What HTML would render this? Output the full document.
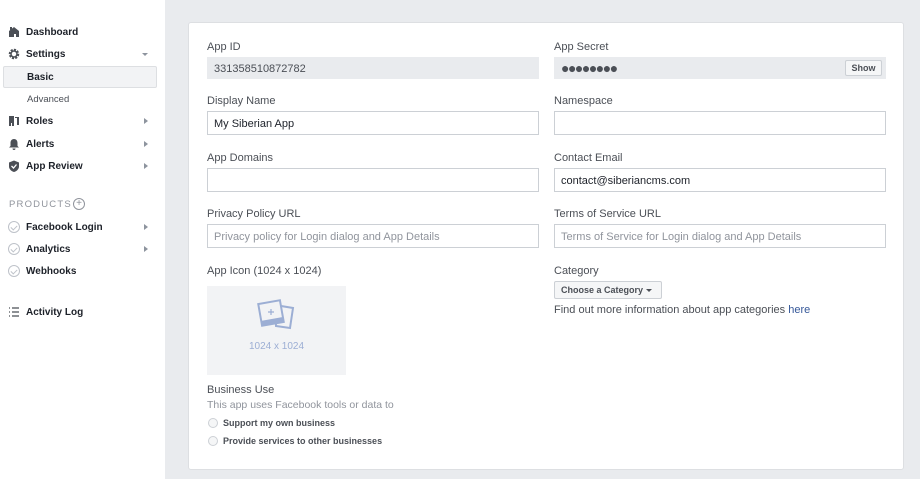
<!DOCTYPE html>
<html><head><style>
*{box-sizing:border-box;margin:0;padding:0}
body{width:920px;height:479px;overflow:hidden;background:#e9ebee;font-family:"Liberation Sans",Helvetica,sans-serif;position:relative;color:#1d2129}
.sb{position:absolute;left:0;top:0;width:165px;height:479px;background:#fff}
.a{position:absolute}
.nav{position:absolute;left:26px;font-size:10px;font-weight:bold;color:#1d2129}
.ic{position:absolute;left:8px;width:12px;height:12px}
.arr{position:absolute;left:144px;width:0;height:0;border-top:3px solid transparent;border-bottom:3px solid transparent;border-left:4px solid #8d949e}
.card{position:absolute;left:188px;top:22px;width:716px;height:448px;background:#fff;border:1px solid #dddfe2;border-radius:3px}
.lb{position:absolute;font-size:11px;color:#4b4f56}
.in{position:absolute;width:332px;height:24px;border:1px solid #ccd0d5;background:#fff;font-size:11px;padding:6px 6px 0;color:#1d2129}
.ph{color:#90949c}
.chk{position:absolute;left:8px;width:12px;height:12px;border:1px solid #bec2c9;border-radius:50%}
.chk:after{content:"";position:absolute;left:3px;top:2px;width:3px;height:5px;border-right:1px solid #bec2c9;border-bottom:1px solid #bec2c9;transform:rotate(45deg)}
.radio{position:absolute;left:208px;width:10px;height:10px;border:1px solid #ccd0d5;border-radius:50%;background:#f5f6f7}
</style></head><body>
<div class="sb">
 <svg class="ic" style="top:26px" viewBox="0 0 12 12"><path d="M1 5L6 1l5 4v6H8V8H6v3H1z" fill="#4b4f56"/><rect x="2" y="1" width="2" height="3" fill="#4b4f56"/></svg>
 <div class="nav" style="top:27px">Dashboard</div>
 <svg class="ic" style="top:48px" viewBox="0 0 12 12"><circle cx="6" cy="6" r="4" fill="none" stroke="#4b4f56" stroke-width="2.5" stroke-dasharray="2 1.1"/><circle cx="6" cy="6" r="3" fill="none" stroke="#4b4f56" stroke-width="1.5"/></svg>
 <div class="nav" style="top:49px">Settings</div>
 <div class="a" style="left:142px;top:53px;border-left:3px solid transparent;border-right:3px solid transparent;border-top:3px solid #8d949e"></div>
 <div class="a" style="left:3px;top:66px;width:154px;height:22px;background:#f2f3f5;border:1px solid #dddfe2;border-radius:2px"></div>
 <div class="nav" style="top:72px;left:27px">Basic</div>
 <div class="nav" style="top:94px;left:27px;font-weight:normal;color:#4b4f56;font-size:9.5px">Advanced</div>
 <svg class="ic" style="top:115px" viewBox="0 0 12 12"><path d="M1 1h5v10H4V8H3v3H1z M7 2h4v8H9V3H7z" fill="#4b4f56"/></svg>
 <div class="nav" style="top:116px">Roles</div><div class="arr" style="top:118px"></div>
 <svg class="ic" style="top:138px" viewBox="0 0 12 12"><path d="M6 1c2.5 0 3.5 2 3.5 4v3l1.5 1.5H1L2.5 8V5C2.5 3 3.5 1 6 1z M4.5 10.5h3a1.5 1.5 0 01-3 0z" fill="#4b4f56"/></svg>
 <div class="nav" style="top:139px">Alerts</div><div class="arr" style="top:141px"></div>
 <svg class="ic" style="top:160px" viewBox="0 0 12 12"><path d="M6 0.5l5 2v4c0 3-3 5-5 5.5C4 11.5 1 9.5 1 6.5v-4z" fill="#4b4f56"/><path d="M3.5 6l2 2 3-3.5" stroke="#fff" stroke-width="1.3" fill="none"/></svg>
 <div class="nav" style="top:161px">App Review</div><div class="arr" style="top:163px"></div>
 <div class="a" style="left:9px;top:199px;font-size:9.5px;letter-spacing:1.2px;color:#90949c">PRODUCTS</div>
 <div class="a" style="left:73px;top:198px;width:12px;height:12px;border:1px solid #90949c;border-radius:50%;font-size:10px;line-height:10px;text-align:center;color:#90949c">+</div>
 <div class="chk" style="top:221px"></div><div class="nav" style="top:222px">Facebook Login</div><div class="arr" style="top:224px"></div>
 <div class="chk" style="top:243px"></div><div class="nav" style="top:244px">Analytics</div><div class="arr" style="top:246px"></div>
 <div class="chk" style="top:265px"></div><div class="nav" style="top:266px">Webhooks</div>
 <svg class="ic" style="top:306px" viewBox="0 0 12 12"><path d="M1 2h1M1 6h1M1 10h1M4 2h7M4 6h7M4 10h7" stroke="#4b4f56" stroke-width="1.2"/></svg>
 <div class="nav" style="top:307px">Activity Log</div>
</div>
<div class="card"></div>
<div class="lb" style="left:207px;top:41px">App ID</div>
<div class="in" style="left:207px;top:57px;height:22px;background:#e9ebee;border-color:#e9ebee;color:#4b4f56;padding-top:5px">331358510872782</div>
<div class="lb" style="left:554px;top:41px">App Secret</div>
<div class="in" style="left:554px;top:57px;height:22px;background:#e9ebee;border-color:#e9ebee;font-size:14px;letter-spacing:-1.5px;padding-top:2px;color:#4b4f56">●●●●●●●●</div>
<div class="a" style="left:845px;top:60px;width:37px;height:16px;background:#f5f6f7;border:1px solid #ccd0d5;border-radius:2px;font-size:9px;font-weight:bold;color:#4b4f56;text-align:center;line-height:14px">Show</div>
<div class="lb" style="left:207px;top:95px">Display Name</div>
<div class="in" style="left:207px;top:111px">My Siberian App</div>
<div class="lb" style="left:554px;top:95px">Namespace</div>
<div class="in" style="left:554px;top:111px"></div>
<div class="lb" style="left:207px;top:152px">App Domains</div>
<div class="in" style="left:207px;top:168px"></div>
<div class="lb" style="left:554px;top:152px">Contact Email</div>
<div class="in" style="left:554px;top:168px">contact@siberiancms.com</div>
<div class="lb" style="left:207px;top:208px">Privacy Policy URL</div>
<div class="in ph" style="left:207px;top:224px">Privacy policy for Login dialog and App Details</div>
<div class="lb" style="left:554px;top:208px">Terms of Service URL</div>
<div class="in ph" style="left:554px;top:224px">Terms of Service for Login dialog and App Details</div>
<div class="lb" style="left:207px;top:265px">App Icon (1024 x 1024)</div>
<div class="a" style="left:207px;top:286px;width:139px;height:89px;background:#f2f3f5"></div>
<svg class="a" style="left:255px;top:297px" width="42" height="36" viewBox="0 0 42 36"><path d="M20 8l18 3-3 20-14-2z" fill="none" stroke="#9caed4" stroke-width="2"/><g transform="rotate(-10 16 16)"><rect x="5" y="5" width="22" height="22" fill="#f2f3f5" stroke="#9caed4" stroke-width="2"/><rect x="5" y="22" width="22" height="5" fill="#9caed4"/></g><path d="M16 12v6M13 15h6" stroke="#9caed4" stroke-width="1.2"/></svg>
<div class="a" style="left:207px;top:341px;width:139px;text-align:center;font-size:10px;color:#9caed4">1024 x 1024</div>
<div class="lb" style="left:207px;top:384px">Business Use</div>
<div class="lb" style="left:207px;top:399px;color:#90949c;font-size:10.5px">This app uses Facebook tools or data to</div>
<div class="radio" style="top:418px"></div><div class="a" style="left:223px;top:418px;font-size:9px;font-weight:bold;color:#4b4f56">Support my own business</div>
<div class="radio" style="top:436px"></div><div class="a" style="left:223px;top:436px;font-size:9px;font-weight:bold;color:#4b4f56">Provide services to other businesses</div>
<div class="lb" style="left:554px;top:265px">Category</div>
<div class="a" style="left:554px;top:281px;width:108px;height:18px;background:#f5f6f7;border:1px solid #ccd0d5;border-radius:2px;font-size:9px;font-weight:bold;color:#4b4f56;padding:3px 6px">Choose a Category <span style="display:inline-block;border-left:3px solid transparent;border-right:3px solid transparent;border-top:3px solid #4b4f56;vertical-align:middle"></span></div>
<div class="lb" style="left:554px;top:304px;color:#4b4f56">Find out more information about app categories <span style="color:#365899">here</span></div>
</body></html>
